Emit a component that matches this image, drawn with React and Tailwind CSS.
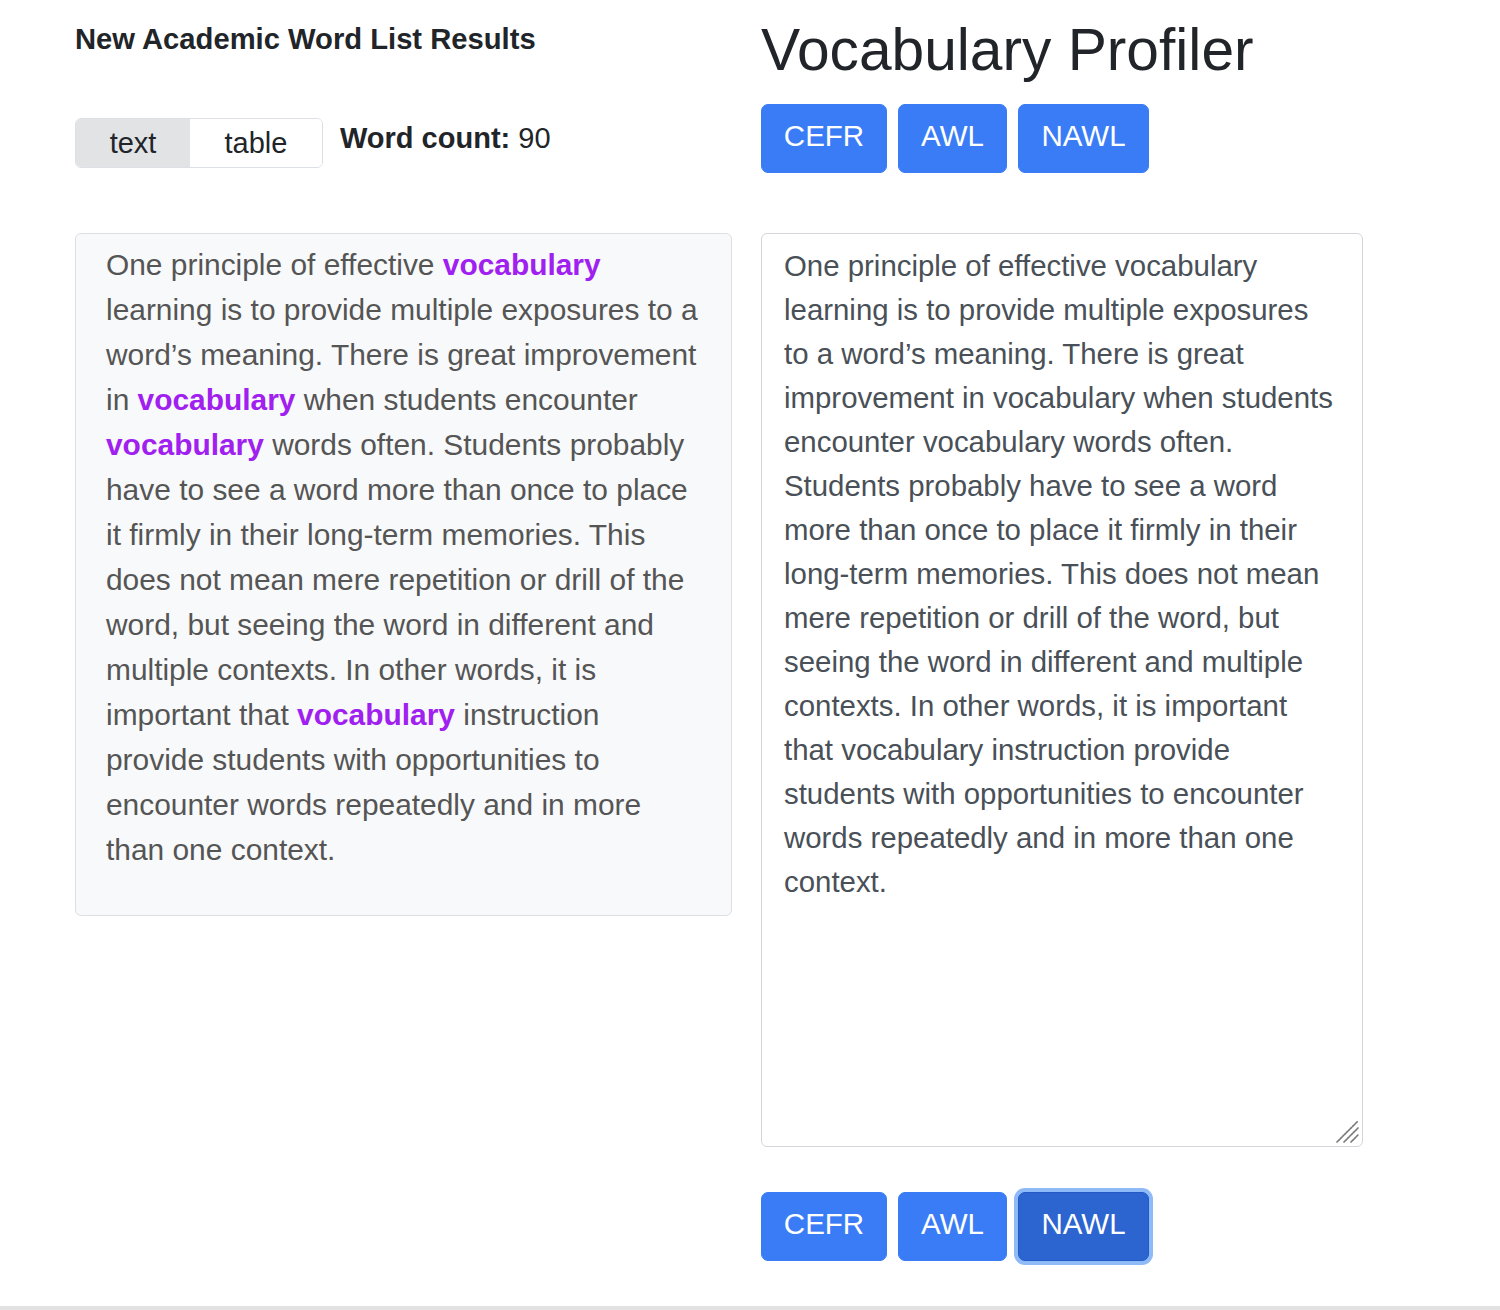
import React, { useState } from 'react';

const passage =
    'One principle of effective vocabulary learning is to provide multiple exposures to a word’s meaning. There is great improvement in vocabulary when students encounter vocabulary words often. Students probably have to see a word more than once to place it firmly in their long-term memories. This does not mean mere repetition or drill of the word, but seeing the word in different and multiple contexts. In other words, it is important that vocabulary instruction provide students with opportunities to encounter words repeatedly and in more than one context.';

// Líneas del resultado tal como se muestran en el panel
const resultLines = [
    'One principle of effective vocabulary',
    'learning is to provide multiple exposures to a',
    'word’s meaning. There is great improvement',
    'in vocabulary when students encounter',
    'vocabulary words often. Students probably',
    'have to see a word more than once to place',
    'it firmly in their long-term memories. This',
    'does not mean mere repetition or drill of the',
    'word, but seeing the word in different and',
    'multiple contexts. In other words, it is',
    'important that vocabulary instruction',
    'provide students with opportunities to',
    'encounter words repeatedly and in more',
    'than one context.',
];

// Palabras de la lista NAWL que se resaltan en el resultado
const nawlWords = ['vocabulary'];

function HighlightedLine({ text }) {
    const parts = text.split(/(\s+)/);
    return (
        <div className="whitespace-nowrap">
            {parts.map((part, i) => {
                const clean = part.toLowerCase().replace(/[^a-z’'-]/g, '');
                if (nawlWords.includes(clean)) {
                    return (
                        <span key={i} className="font-bold text-[#a020f0]">
                            {part}
                        </span>
                    );
                }
                return <React.Fragment key={i}>{part}</React.Fragment>;
            })}
        </div>
    );
}

function ProfilerButtons({ active }) {
    const buttons = [
        { id: 'cefr', label: 'CEFR', width: 'w-[126px]' },
        { id: 'awl', label: 'AWL', width: 'w-[109px]' },
        { id: 'nawl', label: 'NAWL', width: 'w-[131px]' },
    ];
    return (
        <div className="flex gap-[11px]">
            {buttons.map((b) => (
                <button
                    key={b.id}
                    className={`${b.width} h-[69px] flex items-center justify-center pb-[5px] rounded-[7px] text-[29.5px] text-white ${
                        active === b.id
                            ? 'bg-[#2c64d0] border border-[#2458c4] ring-4 ring-[#8fbaf8]'
                            : 'bg-[#3a7cf6] border border-[#3a7cf6]'
                    }`}
                >
                    {b.label}
                </button>
            ))}
        </div>
    );
}

export default function App() {
    const [view, setView] = useState('text');
    const [input, setInput] = useState(passage);

    return (
        <div className="h-[1310px] bg-white border-b-4 border-[#e2e2e2] font-['Liberation_Sans',Arial,sans-serif]">
            <div className="flex gap-[29px] pl-[75px]">
                {/* Resultados */}
                <div className="w-[657px]">
                    <h5 className="mt-[23px] text-[29.2px] leading-[32px] font-bold text-[#212529]">
                        New Academic Word List Results
                    </h5>
                    <div className="mt-[63px] flex items-start">
                        <div className="flex h-[50px] border border-[#dcdfe3] rounded-[6px] overflow-hidden">
                            <button
                                onClick={() => setView('text')}
                                className={`w-[114px] text-[29px] leading-[48px] text-[#212529] ${view === 'text' ? 'bg-[#e2e3e5]' : 'bg-white'}`}
                            >
                                text
                            </button>
                            <button
                                onClick={() => setView('table')}
                                className={`w-[132px] text-[29px] leading-[48px] text-[#212529] ${view === 'table' ? 'bg-[#e2e3e5]' : 'bg-white'}`}
                            >
                                table
                            </button>
                        </div>
                        <div className="ml-[17px] text-[29px] leading-[40px] text-[#212529]">
                            <span className="font-bold">Word count:</span> 90
                        </div>
                    </div>
                    <div className="mt-[65px] h-[683px] bg-[#f8f9fa] border border-[#dcdfe3] rounded-[6px] pt-[8px] px-[30px] text-[29.9px] leading-[45px] text-[#555555]">
                        {resultLines.map((line, i) => (
                            <HighlightedLine key={i} text={line} />
                        ))}
                    </div>
                </div>

                {/* Perfilador */}
                <div className="w-[602px]">
                    <h1 className="mt-[15px] text-[58.7px] leading-[70px] text-[#212529]">Vocabulary Profiler</h1>
                    <div className="mt-[19px]">
                        <ProfilerButtons active={null} />
                    </div>
                    <div className="relative mt-[60px] w-[602px] h-[914px]">
                        <textarea
                            value={input}
                            onChange={(e) => setInput(e.target.value)}
                            className="block w-full h-full resize-none bg-white border border-[#d3d6da] rounded-[6px] pt-[10px] pl-[22px] pr-[22px] text-[29.4px] leading-[44px] text-[#495057] outline-none"
                        />
                        {/* Asa de redimensionado */}
                        <svg
                            className="absolute right-[3px] bottom-[3px] pointer-events-none"
                            width="26"
                            height="26"
                            viewBox="0 0 26 26"
                        >
                            <g stroke="#7a7a7a" strokeWidth="1.7" strokeLinecap="round" strokeDasharray="1.5 1.2">
                                <line x1="3" y1="24" x2="24" y2="3" />
                                <line x1="10" y1="24" x2="24" y2="10" />
                                <line x1="17" y1="24" x2="24" y2="17" />
                            </g>
                        </svg>
                    </div>
                    <div className="mt-[45px]">
                        <ProfilerButtons active="nawl" />
                    </div>
                </div>
            </div>
        </div>
    );
}
